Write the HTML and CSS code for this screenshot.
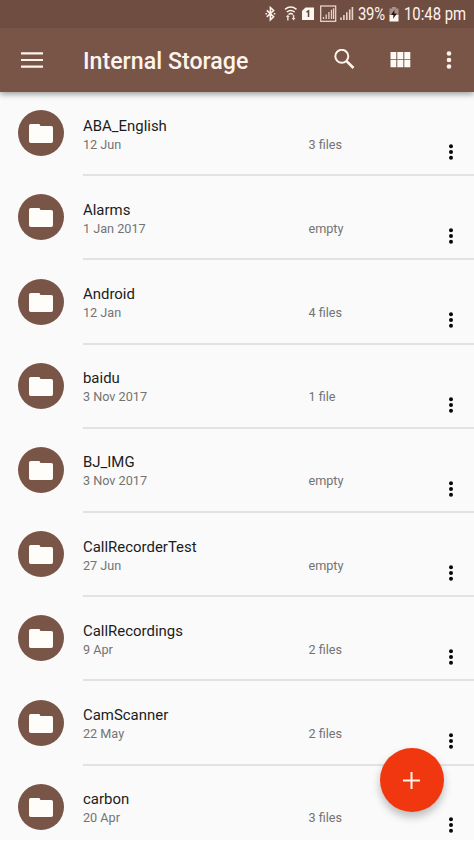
FILE: index.html
```html
<!DOCTYPE html>
<html lang="en">
<head>
<meta charset="utf-8">
<title>Internal Storage</title>
<link rel="stylesheet" href="styles.css">
</head>
<body>
<svg class="defs" width="0" height="0" aria-hidden="true">
  <symbol id="folder" viewBox="0 0 24 19"><path d="M1.800 0h8.200Q11 0 11.400 1.900H22.200Q24 1.900 24 3.700v13.500Q24 19 22.200 19H1.800Q0 19 0 17.200V1.800Q0 0 1.800 0Z"/></symbol>
  <symbol id="dots" viewBox="0 0 6 18"><circle cx="3" cy="3.300" r="2"/><circle cx="3" cy="9" r="2"/><circle cx="3" cy="14.700" r="2"/></symbol>
</svg>
<div class="screen">
  <header class="top">
    <div class="status">
      <svg class="status-icons" width="92" height="20" viewBox="264 4 92 20">
        <path d="M266.800 10.300l6.800 6.400-3.200 3.100V7.500l3.200 3-6.800 6.300" fill="none" stroke="#fff2eb" stroke-width="1.600"/>
        <path d="M265.500 13.700h1.500M273.800 13.700h1.500" stroke="#fff2eb" stroke-width="1.600"/>
        <g fill="none" stroke="#fff2eb" stroke-width="1.500"><path d="M285 9.300Q290.700 4.700 296.500 9.300M286.800 12Q290.700 8.800 294.700 12M288.500 14.500Q290.700 12.700 293 14.500"/></g>
        <path d="M285.800 17l2-2.200 2 2.200h-1.200v3.500h-1.500v-3.500ZM291.600 18h1.200v-3h1.500v3h1.200l-1.900 2.500Z" fill="#eddbd2"/>
        <path d="M305.500 7.500h8.500v12.500h-12v-9Z" fill="#fff8f2"/>
        <path d="M306.500 12.200l2-1.300v6" fill="none" stroke="#664539" stroke-width="1.500"/>
        <rect x="320.700" y="6" width="15" height="15.300" fill="none" stroke="#f0dcd3" stroke-width="1.200"/>
        <path d="M323.500 19v-2M326.200 19v-4.500M328.900 19v-7M331.500 19v-9.200M333.600 19V8.300" stroke="#e8d3c9" stroke-width="1.300"/>
        <path d="M341 20v-2.500M343.900 20v-5M346.800 20v-7.700M349.700 20V9.500M352.400 20V7" stroke="#e8d3c9" stroke-width="1.600"/>
      </svg>
      <span class="battery-text">39%</span>
      <svg class="battery" width="10" height="15" viewBox="0 0 10 15"><path d="M3 0h4v1.500h2.500v7h-9v-7H3Z" fill="#a89088"/><path d="M.5 8h9v6.500h-9Z" fill="#fff6f0"/><path d="M5.500 2.800L2 8h2.500L4 11.700 8 6.500H5.300Z" fill="#24130e"/></svg>
      <span class="clock">10:48 pm</span>
    </div>
    <div class="bar">
      <svg class="menu" width="22" height="17" viewBox="0 0 22 17"><path d="M0 1.400h22M0 8h22M0 14.600h22" stroke="#fff4ed" stroke-width="2.200"/></svg>
      <h1>Internal Storage</h1>
      <svg class="search" width="21" height="21" viewBox="0 0 21 21" fill="none" stroke="#fff4ed"><circle cx="7.800" cy="7.300" r="6.500" stroke-width="2"/><path d="M12.300 11.800l7.200 7.200" stroke-width="2.600"/></svg>
      <svg class="grid" width="21" height="16" viewBox="0 0 21 16"><path fill="#fffaf5" d="M.5 0h5.800v7H.5ZM7.300 0h6v7h-6ZM14.300 0h6v7h-6ZM.5 7.800h5.800v7.500H.5ZM7.300 7.800h6v7.500h-6ZM14.300 7.800h6v7.500h-6Z"/></svg>
      <svg class="more" width="6" height="20" viewBox="0 0 6 20" fill="#fff4ed"><circle cx="3" cy="3.500" r="2.300"/><circle cx="3" cy="10" r="2.300"/><circle cx="3" cy="16.500" r="2.300"/></svg>
    </div>
  </header>
  <main class="list">
    <div class="row"><span class="disc"><svg><use href="#folder"/></svg></span><div class="info"><div class="name">ABA_English</div><div class="date">12 Jun</div><div class="count">3 files</div><svg class="dots"><use href="#dots"/></svg></div></div>
    <div class="row"><span class="disc"><svg><use href="#folder"/></svg></span><div class="info"><div class="name">Alarms</div><div class="date">1 Jan 2017</div><div class="count">empty</div><svg class="dots"><use href="#dots"/></svg></div></div>
    <div class="row"><span class="disc"><svg><use href="#folder"/></svg></span><div class="info"><div class="name">Android</div><div class="date">12 Jan</div><div class="count">4 files</div><svg class="dots"><use href="#dots"/></svg></div></div>
    <div class="row"><span class="disc"><svg><use href="#folder"/></svg></span><div class="info"><div class="name">baidu</div><div class="date">3 Nov 2017</div><div class="count">1 file</div><svg class="dots"><use href="#dots"/></svg></div></div>
    <div class="row"><span class="disc"><svg><use href="#folder"/></svg></span><div class="info"><div class="name">BJ_IMG</div><div class="date">3 Nov 2017</div><div class="count">empty</div><svg class="dots"><use href="#dots"/></svg></div></div>
    <div class="row"><span class="disc"><svg><use href="#folder"/></svg></span><div class="info"><div class="name">CallRecorderTest</div><div class="date">27 Jun</div><div class="count">empty</div><svg class="dots"><use href="#dots"/></svg></div></div>
    <div class="row"><span class="disc"><svg><use href="#folder"/></svg></span><div class="info"><div class="name">CallRecordings</div><div class="date">9 Apr</div><div class="count">2 files</div><svg class="dots"><use href="#dots"/></svg></div></div>
    <div class="row"><span class="disc"><svg><use href="#folder"/></svg></span><div class="info"><div class="name">CamScanner</div><div class="date">22 May</div><div class="count">2 files</div><svg class="dots"><use href="#dots"/></svg></div></div>
    <div class="row"><span class="disc"><svg><use href="#folder"/></svg></span><div class="info"><div class="name">carbon</div><div class="date">20 Apr</div><div class="count">3 files</div><svg class="dots"><use href="#dots"/></svg></div></div>
  </main>
  <button class="fab" aria-label="Add"><svg width="17" height="17" viewBox="0 0 17 17"><path d="M8.500 0v17M0 8.500h17" stroke="#fff4ec" stroke-width="2"/></svg></button>
</div>
</body>
</html>
```
FILE: styles.css
```css
* { box-sizing: border-box; }
body { margin: 0; background: #fff; font-family: Roboto, sans-serif; overflow: hidden; }
svg { display: block; flex: none; }
.defs { position: absolute; }
.screen { position: relative; width: 474px; height: 840px; overflow: hidden; background: #fafafa; }
.top { position: relative; height: 92px; background: #795548; box-shadow: 0 2px 6px rgba(0, 0, 0, .4); color: #fff4ed; }
.status { display: flex; height: 28px; align-items: center; padding-left: 264px; white-space: nowrap; background: #704d41; }
.battery-text, .clock { font-size: 17.500px; transform: scaleX(.85); transform-origin: left center; }
.battery-text { margin-left: 2px; width: 31px; letter-spacing: -.3px; }
.battery { margin-right: 5px; }
.bar { display: flex; height: 64px; align-items: center; padding-left: 21px; }
h1 { margin: 2px 0 0 40px; width: 251px; font-size: 23.200px; font-weight: 500; line-height: 28px; white-space: nowrap; }
.search { margin-top: -1px; }
.grid { margin: -1px 0 0 35px; }
.more { margin-left: 35px; }
.list { display: flex; flex-direction: column; }
.row { display: flex; height: 84.200px; flex: none; padding-left: 18.300px; }
.disc { display: flex; width: 46px; height: 46px; margin-top: 18.200px; align-items: center; justify-content: center; border-radius: 50%; background: #795548; }
.disc svg { width: 24px; height: 19px; margin-top: 1px; fill: #fffdfa; }
.info { display: grid; flex: 1; margin-left: 18.700px; padding-top: 23.700px; grid-template-columns: 225.500px 134px 1fr; grid-template-rows: 20px 18px 1fr; border-bottom: 2px solid #e2e2e2; white-space: nowrap; }
.name { grid-column: 1 / 4; font-size: 14.950px; line-height: 20px; color: #1c1c1c; }
.date, .count { font-size: 12.650px; line-height: 18px; color: #737373; }
.dots { width: 6px; height: 18px; margin: 7.300px 0 0 5.500px; fill: #080808; }
.fab { position: absolute; left: 379.500px; top: 748px; display: flex; width: 64px; height: 64px; padding: 0; align-items: center; justify-content: center; border: 0; border-radius: 50%; background: #f1370f; box-shadow: 0 5px 9px rgba(0, 0, 0, .25); }
```
